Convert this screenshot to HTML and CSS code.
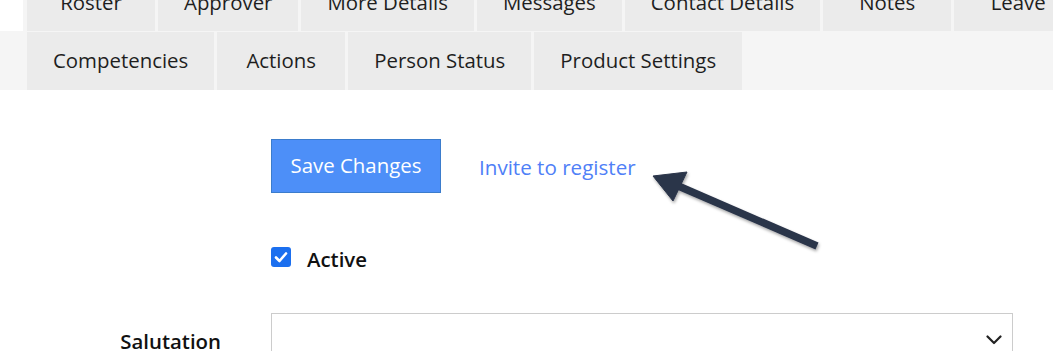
FILE: index.html
```html
<!DOCTYPE html>
<html lang="en">
<head>
<meta charset="utf-8">
<title>Person</title>
<link rel="stylesheet" href="styles.css">
</head>
<body>
<div class="page">
  <nav class="tabs">
    <div class="tab-row tab-row--top">
      <a class="tab">Roster</a>
      <a class="tab">Approver</a>
      <a class="tab">More Details</a>
      <a class="tab">Messages</a>
      <a class="tab">Contact Details</a>
      <a class="tab">Notes</a>
      <a class="tab">Leave</a>
    </div>
    <div class="tab-row tab-row--bottom">
      <a class="tab">Competencies</a>
      <a class="tab">Actions</a>
      <a class="tab">Person Status</a>
      <a class="tab">Product Settings</a>
    </div>
  </nav>

  <form class="form">
    <div class="form-row form-row--actions">
      <div class="field actions">
        <button type="button" class="btn-save">Save Changes</button>
        <a class="invite-link">Invite to register</a>
      </div>
    </div>

    <div class="form-row form-row--check">
      <div class="field check">
        <span class="checkbox">
          <svg viewBox="0 0 20 20" width="20" height="20"><path d="M5 10.5 L8.5 14 L15 6.5" fill="none" stroke="#fff" stroke-width="2.6" stroke-linecap="round" stroke-linejoin="round"/></svg>
        </span>
        <span class="check-label">Active</span>
      </div>
    </div>

    <div class="form-row form-row--select">
      <label class="label">Salutation</label>
      <div class="field">
        <div class="select">
          <svg class="chevron" viewBox="0 0 16 10" width="16" height="10"><path d="M1.5 1.5 L8 8 L14.5 1.5" fill="none" stroke="#222" stroke-width="2.2" stroke-linecap="round" stroke-linejoin="round"/></svg>
        </div>
      </div>
    </div>
  </form>

  <svg class="arrow" viewBox="0 0 200 100" width="200" height="100">
    <defs>
      <filter id="sh" x="-20%" y="-20%" width="140%" height="160%">
        <feDropShadow dx="1" dy="2" stdDeviation="1.5" flood-color="#000" flood-opacity="0.35"/>
      </filter>
    </defs>
    <g filter="url(#sh)" fill="#2a3449" stroke="#2a3449">
      <line x1="36" y1="25" x2="177" y2="86" stroke-width="7.5"/>
      <polygon points="13,16 47,12 33,41" stroke-width="1" stroke-linejoin="miter"/>
    </g>
  </svg>
</div>
</body>
</html>
```

FILE: styles.css
```css
* { box-sizing: border-box; }

html, body {
  margin: 0;
  padding: 0;
  background: #fff;
}

body {
  font-family: "Open Sans", "Liberation Sans", sans-serif;
  color: #1e1e1e;
  overflow: hidden;
}

.page {
  position: relative;
  width: 1053px;
  height: 351px;
  overflow: hidden;
}

/* Tabs */
.tab-row {
  display: flex;
  gap: 3px;
  background: #f5f5f5;
  overflow: hidden;
}

.tab-row--top {
  margin-left: 23px;
  padding-left: 4px;
  height: 31px;
}

.tab-row--bottom {
  padding-left: 27px;
  padding-top: 1px;
  height: 59px;
}

.tab {
  flex-shrink: 0;
  display: flex;
  align-items: center;
  justify-content: center;
  height: 58px;
  min-width: 128px;
  padding: 0 26px 3px;
  background: #ebebeb;
  font-size: 20.4px;
  color: #1e1e1e;
  white-space: nowrap;
  text-decoration: none;
}

.tab-row--top .tab {
  margin-top: -26px;
}

/* Form */
.form {
  padding-top: 49px;
}

.form-row {
  display: grid;
  grid-template-columns: 271px 742px;
  align-items: center;
}

.form-row .field {
  grid-column: 2;
}

.actions {
  display: flex;
  align-items: center;
}

.btn-save {
  height: 54px;
  width: 170px;
  padding: 0 0 2px;
  background: #4d8ff8;
  border: 1px solid #3b7ccc;
  color: #fff;
  font-family: inherit;
  font-size: 20.4px;
  cursor: pointer;
}

.invite-link {
  margin-left: 38px;
  margin-top: 2px;
  font-size: 20.6px;
  color: #4f80f7;
  text-decoration: none;
}

.form-row--check {
  margin-top: 54px;
}

.check {
  display: flex;
  align-items: flex-start;
  gap: 16px;
}

.checkbox {
  display: block;
  width: 20px;
  height: 20px;
  border-radius: 3px;
  background: #1b6fef;
}

.checkbox svg {
  display: block;
}

.check-label {
  font-size: 20.4px;
  font-weight: 600;
  line-height: 27px;
  margin-top: -1px;
  color: #111;
}

.form-row--select {
  margin-top: 40px;
}

.label {
  text-align: right;
  padding-right: 50px;
  font-size: 20.4px;
  font-weight: 600;
  color: #111;
  margin-top: 0;
}

.select {
  position: relative;
  height: 56px;
  border: 1px solid #cccccc;
  background: #fff;
}

.chevron {
  position: absolute;
  right: 10px;
  top: 21px;
}

/* Annotation arrow overlay */
.arrow {
  position: absolute;
  left: 640px;
  top: 160px;
  pointer-events: none;
}
```
